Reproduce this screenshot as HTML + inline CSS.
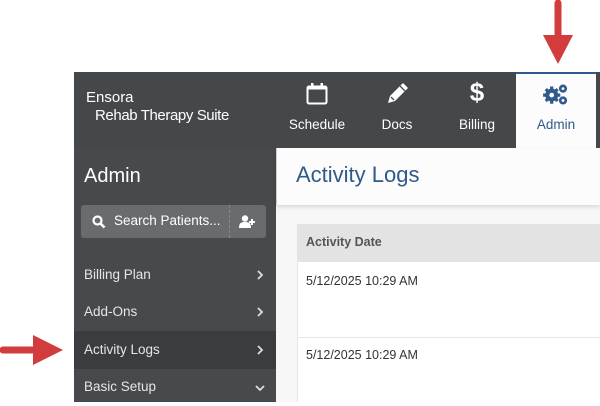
<!DOCTYPE html>
<html><head><meta charset="utf-8"><style>
*{margin:0;padding:0;box-sizing:border-box}
body{width:600px;height:402px;background:#fff;position:relative;overflow:hidden;font-family:"Liberation Sans",sans-serif}
.abs{position:absolute}
#top{left:74px;top:72px;width:526px;height:76px;background:#45484b}
#side{left:74px;top:148px;width:202px;height:254px;background:#47494c}
#content{left:276px;top:148px;width:324px;height:254px;background:#f7f7f7}
.tab{position:absolute;top:0;height:76px;color:#fff;font-size:13.5px;text-align:center}
.tab .lbl{position:absolute;top:45px;left:0;right:0}
.item{position:absolute;left:0;width:202px;height:38px;color:#e6e6e6;font-size:13.5px;padding-left:10px;line-height:38px}
.item svg{position:absolute;right:12px;top:14px}
</style></head><body>
<div id="top" class="abs">
  <div class="abs" style="left:12px;top:17px;color:#fff;font-size:15px;line-height:18px">Ensora<br><span style="padding-left:9px;letter-spacing:-0.4px">Rehab Therapy Suite</span></div>
  <div class="tab" style="left:210px;width:66px">
    <svg class="abs" style="left:21px;top:10px" width="24" height="24" viewBox="0 0 24 24"><rect x="2.5" y="4.5" width="19" height="17" rx="1.5" fill="none" stroke="#fff" stroke-width="2"/><rect x="2.5" y="4.5" width="19" height="3" fill="#fff"/><rect x="6" y="1" width="2.5" height="5" fill="#fff"/><rect x="15.5" y="1" width="2.5" height="5" fill="#fff"/></svg>
    <div class="lbl">Schedule</div></div>
  <div class="tab" style="left:290px;width:66px">
    <svg class="abs" style="left:21px;top:10px" width="24" height="24" viewBox="0 0 24 24"><path d="M18 1l5 5-13 13-7 2 2-7z" fill="#fff"/><path d="M6 15l3 3M15 4l5 5" stroke="#45484b" stroke-width="1.3"/></svg>
    <div class="lbl">Docs</div></div>
  <div class="tab" style="left:370px;width:66px">
    <div class="abs" style="left:0;right:0;top:5px;font-size:26px;font-weight:bold">$</div>
    <div class="lbl">Billing</div></div>
  <div class="tab" style="left:442px;width:80px;background:#fcfcfc;border-top:2px solid #2f5a8a;color:#2f5a8a">
    <svg class="abs" style="left:26px;top:8px" width="28" height="24" viewBox="0 0 26 22"><g fill="#2f5a8a"><circle cx="9" cy="12" r="6"/><g stroke="#2f5a8a" stroke-width="3"><path d="M9 4v16M1 12h16M3.5 6.5l11 11M14.5 6.5l-11 11"/></g><circle cx="9" cy="12" r="2.2" fill="#fcfcfc"/><circle cx="19.5" cy="6" r="3.8"/><circle cx="19.5" cy="17" r="3.8"/></g><circle cx="19.5" cy="6" r="1.3" fill="#fcfcfc"/><circle cx="19.5" cy="17" r="1.3" fill="#fcfcfc"/></svg>
    <div class="lbl" style="top:43px">Admin</div></div>
</div>
<div class="abs" style="left:596px;top:72px;width:4px;height:76px;background:#45484b"></div>
<div id="side" class="abs">
  <div class="abs" style="left:10px;top:17px;color:#fff;font-size:20px">Admin</div>
  <div class="abs" style="left:7px;top:57px;width:185px;height:33px;background:#696c6f;border-radius:3px">
    <svg class="abs" style="left:11px;top:10px" width="14" height="14" viewBox="0 0 14 14"><circle cx="5.5" cy="5.5" r="4" fill="none" stroke="#fff" stroke-width="2.2"/><path d="M8.5 8.5l4 4" stroke="#fff" stroke-width="2.6"/></svg>
    <div class="abs" style="left:33px;top:8px;color:#fff;font-size:13.5px">Search Patients...</div>
    <div class="abs" style="left:148px;top:0;height:33px;border-left:1px dashed #888"></div>
    <svg class="abs" style="left:158px;top:10px" width="16" height="13" viewBox="0 0 16 13"><circle cx="6" cy="3.5" r="3.2" fill="#fff"/><path d="M0 13c0-5 2-6 6-6s6 1 6 6z" fill="#fff"/><path d="M13 4v6M10 7h6" stroke="#fff" stroke-width="2"/></svg>
  </div>
  <div class="item" style="top:108px">Billing Plan<svg width="8" height="10" viewBox="0 0 8 10"><path d="M2 1l4 4-4 4" fill="none" stroke="#ddd" stroke-width="1.8"/></svg></div>
  <div class="item" style="top:145px">Add-Ons<svg width="8" height="10" viewBox="0 0 8 10"><path d="M2 1l4 4-4 4" fill="none" stroke="#ddd" stroke-width="1.8"/></svg></div>
  <div class="item" style="top:183px;background:#3a3c3f">Activity Logs<svg width="8" height="10" viewBox="0 0 8 10"><path d="M2 1l4 4-4 4" fill="none" stroke="#ddd" stroke-width="1.8"/></svg></div>
  <div class="item" style="top:220px">Basic Setup<svg width="10" height="8" viewBox="0 0 10 8" style="top:16px;right:11px"><path d="M1 2l4 4 4-4" fill="none" stroke="#ddd" stroke-width="1.8"/></svg></div>
</div>
<div id="content" class="abs">
  <div class="abs" style="left:0;top:0;width:324px;height:57px;background:#fcfcfc;box-shadow:0 2px 4px rgba(0,0,0,0.12);border-left:1px solid #ccc"></div>
  <div class="abs" style="left:20px;top:14px;color:#2f5a8a;font-size:22px">Activity Logs</div>
  <div class="abs" style="left:21px;top:76px;width:303px;height:178px;background:#fff;border-left:1px solid #e6e6e6"></div>
  <div class="abs" style="left:21px;top:76px;width:303px;height:38px;background:#e3e3e3;color:#555;font-weight:bold;font-size:12.5px;padding:11px 0 0 9px">Activity Date</div>
  <div class="abs" style="left:30px;top:126px;color:#333;font-size:12.5px">5/12/2025 10:29 AM</div>
  <div class="abs" style="left:22px;top:189px;width:302px;height:1px;background:#e6e6e6"></div>
  <div class="abs" style="left:30px;top:200px;color:#333;font-size:12.5px">5/12/2025 10:29 AM</div>
</div>
<svg class="abs" style="left:540px;top:0" width="36" height="66" viewBox="0 0 36 66"><path d="M18 3v32" stroke="#d23c3c" stroke-width="7" stroke-linecap="round"/><path d="M3 35h30L18 64z" fill="#d23c3c"/></svg>
<svg class="abs" style="left:0;top:334px" width="66" height="34" viewBox="0 0 66 34"><path d="M3 16h32" stroke="#d23c3c" stroke-width="7" stroke-linecap="round"/><path d="M33 1v30l30-15z" fill="#d23c3c"/></svg>
</body></html>
